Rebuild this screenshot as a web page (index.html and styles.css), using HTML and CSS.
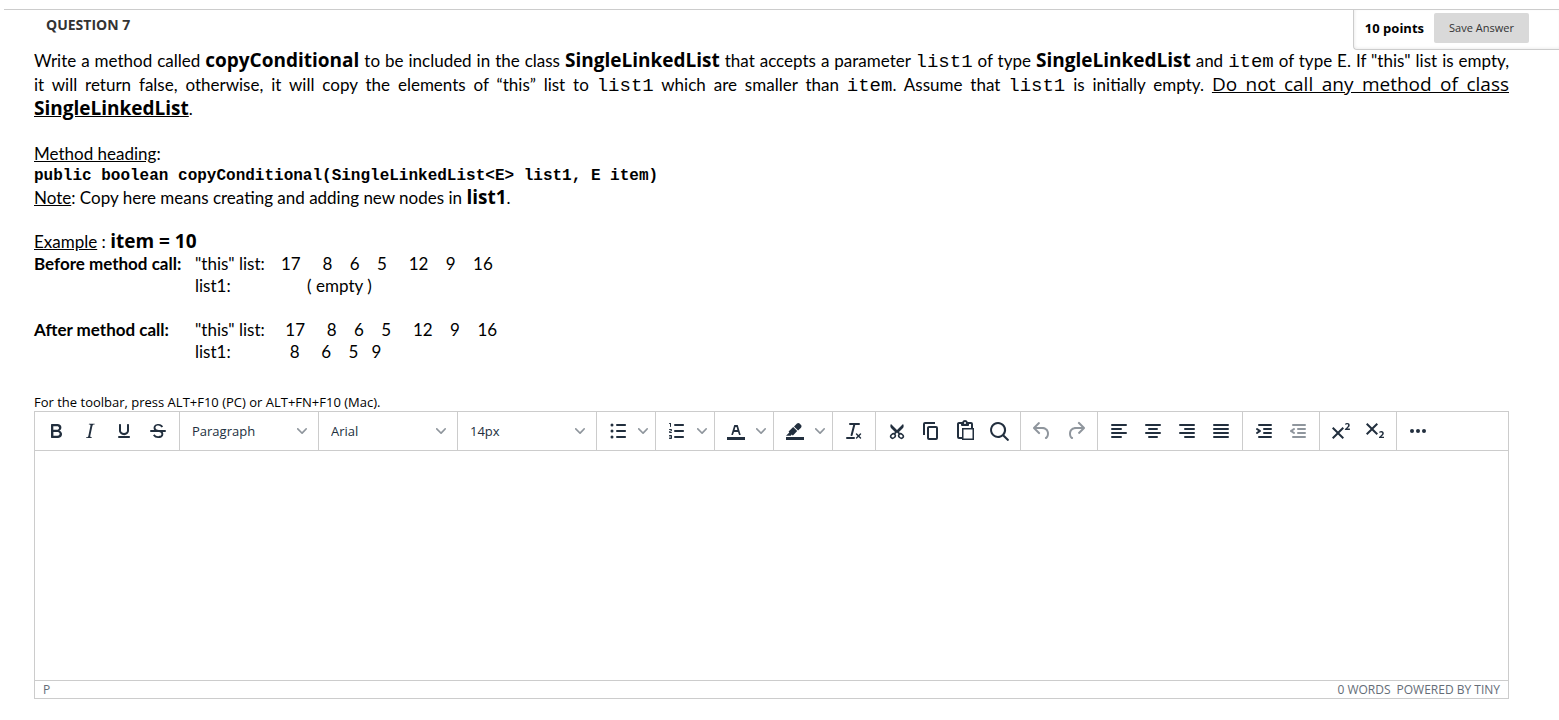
FILE: index.html
```html
<!DOCTYPE html>
<html lang="en">
<head>
    <meta charset="UTF-8">
    <meta name="viewport" content="width=device-width, initial-scale=1.0">
    <title>Question 7</title>
    <link rel="stylesheet" href="styles.css">
</head>
<body>
    <main class="question">
        <header class="question-header">
            <h3>QUESTION 7</h3>
            <div class="points">
                <strong>10 points</strong>
                <button type="button" class="save">Save Answer</button>
            </div>
        </header>

        <div class="content">
            <p class="intro">Write a method called <b>copyConditional</b> to be included in the class <b>SingleLinkedList</b> that accepts a parameter <code>list1</code> of type <b>SingleLinkedList</b> and <code>item</code> of type E. If "this" list is empty, it&nbsp;will return false, otherwise, it will copy the elements of “this” list to <code>list1</code> which are smaller than <code>item</code>. Assume that <code>list1</code> is initially empty. <u class="warning">Do not call any method of class <b>SingleLinkedList</b></u>.</p>

            <p><u>Method heading</u>:</p>
            <p class="signature">public boolean copyConditional(SingleLinkedList&lt;E&gt; list1, E item)</p>
            <p class="last"><u>Note</u>: Copy here means creating and adding new nodes in <b>list1</b>.</p>

            <p><u>Example</u> : <b>item = 10</b></p>
            <div class="row"><strong>Before method call:</strong><span>"this" list:</span><span>17     8    6    5     12    9    16</span></div>
            <div class="row last"><strong></strong><span>list1:</span><span>      ( empty )</span></div>
            <div class="row"><strong>After method call:</strong><span>"this" list:</span><span> 17     8    6    5     12    9    16</span></div>
            <div class="row"><strong></strong><span>list1:</span><span>  8     6    5   9</span></div>
        </div>

        <label class="hint" for="answer">For the toolbar, press ALT+F10 (PC) or ALT+FN+F10 (Mac).</label>
        <div class="editor">
            <div class="toolbar" role="toolbar">
                <div class="group">
                    <button type="button" aria-label="Bold"><svg width="24" height="24"><path fill-rule="evenodd" d="M7.8 19c-.3 0-.5 0-.6-.2l-.2-.5V5.7c0-.2 0-.4.2-.5l.6-.2h5c1.5 0 2.7.3 3.5 1 .7.6 1.1 1.4 1.1 2.5a3 3 0 0 1-.6 1.9c-.4.6-1 1-1.6 1.2.4.1.9.3 1.3.6s.8.7 1 1.2c.4.4.5 1 .5 1.6 0 1.3-.4 2.3-1.3 3-.8.7-2.1 1-3.8 1H7.8zm5-8.3c.6 0 1.2-.1 1.6-.5.4-.3.6-.7.6-1.3 0-1.1-.8-1.7-2.3-1.7H9.3v3.5h3.4zm.5 6c.7 0 1.3-.1 1.7-.4.4-.4.6-.9.6-1.5s-.2-1-.7-1.4c-.4-.3-1-.4-2-.4H9.4v3.8h4z"/></svg></button>
                    <button type="button" aria-label="Italic"><svg width="24" height="24"><path d="M16.7 4.7l-.1.9h-.3c-.6 0-1 0-1.4.3-.3.3-.4.6-.5 1.1l-2.1 9.8v.6c0 .5.4.8 1.4.8h.2l-.2.8H8l.2-.8h.2c1.1 0 1.8-.5 2-1.5l2-9.8.1-.5c0-.6-.4-.8-1.4-.8h-.3l.2-.9h5.8z"/></svg></button>
                    <button type="button" aria-label="Underline"><svg width="24" height="24"><path d="M16 5c.6 0 1 .4 1 1v5.5a4 4 0 0 1-.4 1.8l-1 1.4a5.3 5.3 0 0 1-5.5 1 5 5 0 0 1-1.6-1c-.5-.4-.8-.9-1.1-1.4a4 4 0 0 1-.4-1.8V6c0-.6.4-1 1-1s1 .4 1 1v5.5c0 .3 0 .6.2 1l.6.7a3.3 3.3 0 0 0 2.2.8 3.4 3.4 0 0 0 2.2-.8c.3-.2.4-.5.6-.8l.2-.9V6c0-.6.4-1 1-1zM7 17h10c.6 0 1 .4 1 1s-.4 1-1 1H7a1 1 0 0 1 0-2z"/></svg></button>
                    <button type="button" aria-label="Strikethrough"><svg width="24" height="24"><path d="M15.6 8.5c-.5-.7-1-1.1-1.3-1.3-.6-.4-1.3-.6-2-.6-2.7 0-2.8 1.7-2.8 2.1 0 1.6 1.8 2 3.2 2.3 4.4.9 4.6 2.8 4.6 3.9 0 1.4-.7 4.1-5 4.1A6.2 6.2 0 0 1 7 16.4l1.5-1.1c.4.6 1.6 2 3.7 2 1.6 0 2.5-.4 3-1.2.4-.8.3-2-.8-2.6-.7-.4-1.6-.7-2.9-1-1-.2-3.9-.8-3.9-3.6C7.6 6 10.3 5 12.4 5c2.9 0 4.2 1.6 4.7 2.4l-1.5 1.1z"/><path d="M5 11h14a1 1 0 0 1 0 2H5a1 1 0 0 1 0-2z"/></svg></button>
                </div>
                <div class="group">
                    <div class="dropdown">
                        <select aria-label="Blocks"><option>Paragraph</option></select>
                        <svg class="chevron" width="10" height="10"><path d="M8.7 2.2c.3-.3.8-.3 1 0 .4.4.4.9 0 1.2L5.7 7.8c-.3.3-.9.3-1.2 0L.2 3.4a.8.8 0 0 1 0-1.2c.3-.3.8-.3 1.1 0L5 6l3.7-3.8z"/></svg>
                    </div>
                </div>
                <div class="group">
                    <div class="dropdown">
                        <select aria-label="Fonts"><option>Arial</option></select>
                        <svg class="chevron" width="10" height="10"><path d="M8.7 2.2c.3-.3.8-.3 1 0 .4.4.4.9 0 1.2L5.7 7.8c-.3.3-.9.3-1.2 0L.2 3.4a.8.8 0 0 1 0-1.2c.3-.3.8-.3 1.1 0L5 6l3.7-3.8z"/></svg>
                    </div>
                </div>
                <div class="group">
                    <div class="dropdown">
                        <select aria-label="Font sizes"><option>14px</option></select>
                        <svg class="chevron" width="10" height="10"><path d="M8.7 2.2c.3-.3.8-.3 1 0 .4.4.4.9 0 1.2L5.7 7.8c-.3.3-.9.3-1.2 0L.2 3.4a.8.8 0 0 1 0-1.2c.3-.3.8-.3 1.1 0L5 6l3.7-3.8z"/></svg>
                    </div>
                </div>
                <div class="group">
                    <button type="button" aria-label="Bullet list"><svg width="24" height="24"><path d="M11 5h8c.6 0 1 .4 1 1s-.4 1-1 1h-8a1 1 0 0 1 0-2zm0 6h8c.6 0 1 .4 1 1s-.4 1-1 1h-8a1 1 0 0 1 0-2zm0 6h8c.6 0 1 .4 1 1s-.4 1-1 1h-8a1 1 0 0 1 0-2z"/><circle cx="6" cy="6" r="1.5"/><circle cx="6" cy="12" r="1.5"/><circle cx="6" cy="18" r="1.5"/></svg></button>
                    <button type="button" class="more" aria-label="Bullet list menu"><svg class="chevron" width="10" height="10"><path d="M8.7 2.2c.3-.3.8-.3 1 0 .4.4.4.9 0 1.2L5.7 7.8c-.3.3-.9.3-1.2 0L.2 3.4a.8.8 0 0 1 0-1.2c.3-.3.8-.3 1.1 0L5 6l3.7-3.8z"/></svg></button>
                </div>
                <div class="group">
                    <button type="button" aria-label="Numbered list"><svg width="24" height="24"><path d="M10 17h8c.6 0 1 .4 1 1s-.4 1-1 1h-8a1 1 0 0 1 0-2zm0-6h8c.6 0 1 .4 1 1s-.4 1-1 1h-8a1 1 0 0 1 0-2zm0-6h8c.6 0 1 .4 1 1s-.4 1-1 1h-8a1 1 0 1 1 0-2zM6 4v3.5c0 .3-.2.5-.5.5a.5.5 0 0 1-.5-.5V5h-.5a.5.5 0 0 1 0-1H6zm-1 8.8l.2.2h1.3c.3 0 .5.2.5.5s-.2.5-.5.5H4.9a1 1 0 0 1-.9-1V13c0-.4.3-.8.6-1l1.2-.4.2-.3a.2.2 0 0 0-.2-.2H4.5a.5.5 0 0 1-.5-.5c0-.3.2-.5.5-.5h1.6c.5 0 .9.4.9 1v.1c0 .4-.3.8-.6 1l-1.2.4-.2.3zM7 17v2c0 .6-.4 1-1 1H4.5a.5.5 0 0 1 0-1h1.2c.2 0 .3-.1.3-.3 0-.2-.1-.3-.3-.3H4.4a.4.4 0 1 1 0-.8h1.3c.2 0 .3-.1.3-.3 0-.2-.1-.3-.3-.3H4.5a.5.5 0 1 1 0-1H6c.6 0 1 .4 1 1z"/></svg></button>
                    <button type="button" class="more" aria-label="Numbered list menu"><svg class="chevron" width="10" height="10"><path d="M8.7 2.2c.3-.3.8-.3 1 0 .4.4.4.9 0 1.2L5.7 7.8c-.3.3-.9.3-1.2 0L.2 3.4a.8.8 0 0 1 0-1.2c.3-.3.8-.3 1.1 0L5 6l3.7-3.8z"/></svg></button>
                </div>
                <div class="group">
                    <button type="button" aria-label="Text color"><svg width="24" height="24"><path d="M3 18h18v3H3z"/><path fill-rule="evenodd" d="M8.7 16h-.8a.5.5 0 0 1-.5-.6l2.7-9c.1-.3.3-.4.5-.4h2.8c.2 0 .4.1.5.4l2.7 9a.5.5 0 0 1-.5.6h-.8a.5.5 0 0 1-.4-.4l-.7-2.2c0-.3-.3-.4-.5-.4h-3.4c-.2 0-.4.1-.5.4l-.7 2.2c0 .3-.2.4-.4.4zm2.6-7.6l-.6 2a.5.5 0 0 0 .5.6h1.6a.5.5 0 0 0 .5-.6l-.6-2c0-.3-.3-.4-.5-.4h-.4c-.2 0-.4.1-.5.4z"/></svg></button>
                    <button type="button" class="more" aria-label="Text color menu"><svg class="chevron" width="10" height="10"><path d="M8.7 2.2c.3-.3.8-.3 1 0 .4.4.4.9 0 1.2L5.7 7.8c-.3.3-.9.3-1.2 0L.2 3.4a.8.8 0 0 1 0-1.2c.3-.3.8-.3 1.1 0L5 6l3.7-3.8z"/></svg></button>
                </div>
                <div class="group">
                    <button type="button" aria-label="Background color"><svg width="24" height="24"><path d="M3 18h18v3H3z"/><path d="M7.7 16.7H3l3.3-3.3-.7-.8L10.2 8l4 4.1-4 4.2c-.2.2-.6.2-.8 0l-.6-.7-1.1 1.1zm5-7.5L11 7.4l3-2.9a2 2 0 0 1 2.6 0L18 6c.7.7.7 2 0 2.7l-2.9 2.9-1.8-1.8-.5-.6"/></svg></button>
                    <button type="button" class="more" aria-label="Background color menu"><svg class="chevron" width="10" height="10"><path d="M8.7 2.2c.3-.3.8-.3 1 0 .4.4.4.9 0 1.2L5.7 7.8c-.3.3-.9.3-1.2 0L.2 3.4a.8.8 0 0 1 0-1.2c.3-.3.8-.3 1.1 0L5 6l3.7-3.8z"/></svg></button>
                </div>
                <div class="group">
                    <button type="button" aria-label="Clear formatting"><svg width="24" height="24"><path d="M13.2 6a1 1 0 0 1 0 .2l-2.6 10a1 1 0 0 1-1 .8h-.2a.8.8 0 0 1-.8-1l2.6-10H8a1 1 0 1 1 0-2h9a1 1 0 0 1 0 2h-3.8zM5 18h7a1 1 0 0 1 0 2H5a1 1 0 0 1 0-2zm13 1.5L16.5 18 15 19.5a.7.7 0 0 1-1-1l1.5-1.5-1.5-1.5a.7.7 0 0 1 1-1l1.5 1.5 1.5-1.5a.7.7 0 0 1 1 1L17.5 17l1.5 1.5a.7.7 0 0 1-1 1z"/></svg></button>
                </div>
                <div class="group">
                    <button type="button" aria-label="Cut"><svg width="24" height="24"><path d="M6 5l6 6 6-6 .5 1a3.3 3.3 0 0 1 0 2c0 .4-.3.7-.5 1l-4 4 1.2 1.2-1.2 1.2-2-2-2 2-1.2-1.2L10 13 6 9l-.5-1a3.3 3.3 0 0 1 0-2c0-.4.3-.7.5-1z"/><g fill="none" stroke="#222f3e" stroke-width="1.5"><ellipse cx="8" cy="17" rx="2.5" ry="2" transform="rotate(-40 8 17)"/><ellipse cx="16" cy="17" rx="2.5" ry="2" transform="rotate(40 16 17)"/></g></svg></button>
                    <button type="button" aria-label="Copy"><svg width="24" height="24"><path fill-rule="evenodd" d="M16 3H6a2 2 0 0 0-2 2v11h2V5h10V3zm1 4a2 2 0 0 1 2 2v10a2 2 0 0 1-2 2h-7a2 2 0 0 1-2-2V9c0-1.2.9-2 2-2h7zm0 12V9h-7v10h7z"/></svg></button>
                    <button type="button" aria-label="Paste"><svg width="24" height="24"><path fill-rule="evenodd" d="M18 9V5h-2v1c0 .6-.4 1-1 1H9a1 1 0 0 1-1-1V5H6v13h3V9h9zM9 20H6a2 2 0 0 1-2-2V5c0-1.1.9-2 2-2h3.2A3 3 0 0 1 12 1a3 3 0 0 1 2.8 2H18a2 2 0 0 1 2 2v4h1v12H9v-1zm1.5-9.5v9h9v-9h-9zM12 3a1 1 0 0 0-1 1c0 .5.4 1 1 1s1-.5 1-1-.4-1-1-1z"/></svg></button>
                    <button type="button" aria-label="Find and replace"><svg width="24" height="24"><path fill-rule="evenodd" d="M16 17.3a8 8 0 1 1 1.4-1.4l4.3 4.4a1 1 0 0 1-1.4 1.4l-4.4-4.3zm-5-.3a6 6 0 1 0 0-12 6 6 0 0 0 0 12z"/></svg></button>
                </div>
                <div class="group">
                    <button type="button" aria-label="Undo" disabled><svg width="24" height="24"><path d="M6.4 8H12c3.7 0 6.2 2 6.8 5.1.6 2.7-.4 5.6-2.3 6.8a1 1 0 0 1-1-1.8c1.1-.6 1.8-2.7 1.4-4.6-.5-2.1-2.1-3.5-4.9-3.5H6.4l3.3 3.3a1 1 0 1 1-1.4 1.4l-5-5a1 1 0 0 1 0-1.4l5-5a1 1 0 0 1 1.4 1.4L6.4 8z"/></svg></button>
                    <button type="button" aria-label="Redo" disabled><svg width="24" height="24"><path d="M17.6 10H12c-2.8 0-4.4 1.4-4.9 3.5-.4 2 .3 4 1.4 4.6a1 1 0 1 1-1 1.8c-2-1.2-2.9-4.1-2.3-6.8.6-3 3-5.1 6.8-5.1h5.6l-3.3-3.3a1 1 0 1 1 1.4-1.4l5 5a1 1 0 0 1 0 1.4l-5 5a1 1 0 0 1-1.4-1.4l3.3-3.3z"/></svg></button>
                </div>
                <div class="group">
                    <button type="button" aria-label="Align left"><svg width="24" height="24"><path d="M5 5h14a1 1 0 0 1 0 2H5a1 1 0 1 1 0-2zm0 4h9a1 1 0 0 1 0 2H5a1 1 0 1 1 0-2zm0 4h14a1 1 0 0 1 0 2H5a1 1 0 1 1 0-2zm0 4h9a1 1 0 0 1 0 2H5a1 1 0 0 1 0-2z"/></svg></button>
                    <button type="button" aria-label="Align center"><svg width="24" height="24"><path d="M5 5h14a1 1 0 0 1 0 2H5a1 1 0 1 1 0-2zm3 4h8a1 1 0 0 1 0 2H8a1 1 0 1 1 0-2zm-3 4h14a1 1 0 0 1 0 2H5a1 1 0 0 1 0-2zm3 4h8a1 1 0 0 1 0 2H8a1 1 0 0 1 0-2z"/></svg></button>
                    <button type="button" aria-label="Align right"><svg width="24" height="24"><path d="M5 5h14a1 1 0 0 1 0 2H5a1 1 0 1 1 0-2zm5 4h9a1 1 0 0 1 0 2h-9a1 1 0 0 1 0-2zm-5 4h14a1 1 0 0 1 0 2H5a1 1 0 0 1 0-2zm5 4h9a1 1 0 0 1 0 2h-9a1 1 0 0 1 0-2z"/></svg></button>
                    <button type="button" aria-label="Justify"><svg width="24" height="24"><path d="M5 5h14a1 1 0 0 1 0 2H5a1 1 0 1 1 0-2zm0 4h14a1 1 0 0 1 0 2H5a1 1 0 1 1 0-2zm0 4h14a1 1 0 0 1 0 2H5a1 1 0 0 1 0-2zm0 4h14a1 1 0 0 1 0 2H5a1 1 0 0 1 0-2z"/></svg></button>
                </div>
                <div class="group">
                    <button type="button" aria-label="Increase indent"><svg width="24" height="24"><path d="M7 5h12a1 1 0 0 1 0 2H7a1 1 0 1 1 0-2zm5 4h7a1 1 0 0 1 0 2h-7a1 1 0 0 1 0-2zm0 4h7a1 1 0 0 1 0 2h-7a1 1 0 0 1 0-2zm-5 4h12a1 1 0 0 1 0 2H7a1 1 0 0 1 0-2zm-2.6-3.8L6.2 12l-1.8-1.2a1 1 0 0 1 1.2-1.6l3 2a1 1 0 0 1 0 1.6l-3 2a1 1 0 1 1-1.2-1.6z"/></svg></button>
                    <button type="button" aria-label="Decrease indent" disabled><svg width="24" height="24"><path d="M7 5h12a1 1 0 0 1 0 2H7a1 1 0 1 1 0-2zm5 4h7a1 1 0 0 1 0 2h-7a1 1 0 0 1 0-2zm0 4h7a1 1 0 0 1 0 2h-7a1 1 0 0 1 0-2zm-5 4h12a1 1 0 0 1 0 2H7a1 1 0 0 1 0-2zm1.6-3.8a1 1 0 0 1-1.2 1.6l-3-2a1 1 0 0 1 0-1.6l3-2a1 1 0 0 1 1.2 1.6L6.8 12l1.8 1.2z"/></svg></button>
                </div>
                <div class="group">
                    <button type="button" aria-label="Superscript"><svg width="24" height="24"><path d="M15 9.4L10.4 14l4.6 4.6-1.4 1.4L9 15.4 4.4 20 3 18.6 7.6 14 3 9.4 4.4 8 9 12.6 13.6 8 15 9.4zm5.9 1.6h-5v-1l1-.8 1.7-1.6c.3-.5.5-.9.5-1.3 0-.3 0-.5-.2-.7-.2-.2-.5-.3-.9-.3l-.8.2-.7.4-.4-1.2c.2-.2.5-.4 1-.5.3-.2.8-.2 1.2-.2.8 0 1.4.2 1.8.6.4.4.6 1 .6 1.6 0 .5-.2 1-.5 1.5l-1.3 1.4-.6.5h2.6V11z"/></svg></button>
                    <button type="button" aria-label="Subscript"><svg width="24" height="24"><path d="M10.4 10l4.6 4.6-1.4 1.4L9 11.4 4.4 16 3 14.6 7.6 10 3 5.4 4.4 4 9 8.6 13.6 4 15 5.4 10.4 10zM21 19h-5v-1l1-.8 1.7-1.6c.3-.4.5-.8.5-1.2 0-.3 0-.6-.2-.7-.2-.2-.5-.3-.9-.3a2 2 0 0 0-.8.2l-.7.3-.4-1.1 1-.6 1.2-.2c.8 0 1.4.3 1.8.7.4.4.6.9.6 1.5s-.2 1.1-.5 1.6a8 8 0 0 1-1.3 1.3l-.6.6h2.6V19z"/></svg></button>
                </div>
                <div class="group">
                    <button type="button" aria-label="More"><svg width="24" height="24"><circle cx="6" cy="12" r="2"/><circle cx="12" cy="12" r="2"/><circle cx="18" cy="12" r="2"/></svg></button>
                </div>
            </div>
            <textarea id="answer"></textarea>
            <div class="statusbar">
                <span>P</span>
                <span class="words">0 WORDS</span>
                <a href="#">POWERED BY TINY</a>
            </div>
        </div>
    </main>
</body>
</html>
```
FILE: styles.css
```css
* {
    box-sizing: border-box;
}

body {
    margin: 0;
    background-color: #ffffff;
    color: #000000;
    font-family: "Open Sans", sans-serif;
    font-size: 13px;
}

p {
    margin: 0;
}

button, select, textarea {
    font-family: inherit;
    border: none;
    background: none;
    margin: 0;
    padding: 0;
}

.question {
    margin: 9px 0 0 4px;
    border-top: 1px solid #cccccc;
}

.question-header {
    display: flex;
    justify-content: space-between;
    align-items: flex-start;
    height: 39px;
}

h3 {
    margin: 6px 0 0 42px;
    font-size: 14px;
    line-height: 18px;
    color: #333333;
}

.points {
    display: flex;
    align-items: center;
    gap: 10px;
    height: 40px;
    padding: 0 30px 4px 11px;
    border: 1px solid #cccccc;
    border-width: 0 0 1px 1px;
    border-bottom-left-radius: 4px;
    box-shadow: inset 1px -1px 3px #eeeeee;
}

.save {
    width: 95px;
    height: 30px;
    border-radius: 2px;
    background-color: #d9d9d9;
    color: #333333;
    font-size: 11px;
    cursor: pointer;
}

.content {
    margin: 0 50px 0 30px;
    font-family: Lato, sans-serif;
    font-size: 17px;
    line-height: 22px;
}

.content b, .warning {
    font-family: "Open Sans", sans-serif;
    font-size: 19px;
    line-height: 1;
}

.intro {
    margin-bottom: 22px;
    line-height: 24px;
    text-align: justify;
}

.intro code {
    font-family: "Liberation Mono", monospace;
    font-size: 19px;
    line-height: 1;
}

.signature {
    font-family: "Liberation Mono", monospace;
    font-size: 16px;
    font-weight: bold;
}

.last {
    margin-bottom: 22px;
}

.row {
    display: grid;
    grid-template-columns: 161px 86px 1fr;
    height: 22px;
    white-space: pre;
}

.hint {
    display: block;
    margin: 30px 0 0 30px;
    font-size: 13px;
    line-height: 18px;
}

.editor {
    margin: 0 50px 0 30px;
    border: 1px solid #cccccc;
}

.toolbar {
    display: flex;
    height: 39px;
    border-bottom: 1px solid #cccccc;
}

.group {
    display: flex;
    align-items: center;
    padding: 0 4px;
    border-right: 1px solid #cccccc;
}

.group:last-child {
    border-right: none;
}

.group button {
    display: flex;
    align-items: center;
    justify-content: center;
    width: 34px;
    height: 34px;
}

.group .more {
    width: 16px;
}

.group svg {
    fill: #222f3e;
}

.group button:disabled svg {
    opacity: 0.5;
}

.group .chevron {
    opacity: 0.5;
}

.dropdown {
    display: grid;
    grid-template-columns: 1fr 17px;
    align-items: center;
    width: 130px;
}

.dropdown select {
    grid-area: 1 / 1 / 2 / 3;
    height: 34px;
    padding-left: 8px;
    appearance: none;
    color: #222f3e;
    font-size: 13px;
}

.dropdown .chevron {
    grid-area: 1 / 2;
    pointer-events: none;
}

textarea {
    display: block;
    width: 100%;
    height: 229px;
    padding: 10px;
    resize: none;
    outline: none;
}

.statusbar {
    display: flex;
    gap: 6px;
    height: 18px;
    padding: 0 8px;
    border-top: 1px solid #cccccc;
    color: #656d77;
    font-size: 12px;
    line-height: 17px;
}

.words {
    margin-left: auto;
}

.statusbar a {
    color: inherit;
    text-decoration: none;
}
```
